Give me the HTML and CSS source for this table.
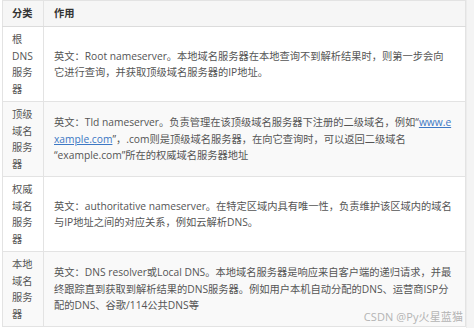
FILE: index.html
```html
<!DOCTYPE html>
<html lang="zh-CN">
<head>
<meta charset="utf-8">
<title>DNS 服务器分类</title>
<link rel="stylesheet" href="styles.css">
</head>
<body>
<div class="page">
  <table class="dns">
    <thead>
      <tr><th class="cat">分类</th><th class="use">作用</th></tr>
    </thead>
    <tbody>
      <tr>
        <td class="cat">根<br>DNS<br>服务<br>器</td>
        <td class="use">英文：Root nameserver。本地域名服务器在本地查询不到解析结果时，则第一步会向<br>它进行查询，并获取顶级域名服务器的IP地址。</td>
      </tr>
      <tr class="alt">
        <td class="cat">顶级<br>域名<br>服务<br>器</td>
        <td class="use">英文：Tld nameserver。负责管理在该顶级域名服务器下注册的二级域名，例如“<a class="link">www.e<br>xample.com</a>”，.com则是顶级域名服务器，在向它查询时，可以返回二级域名<br>“example.com”所在的权威域名服务器地址</td>
      </tr>
      <tr>
        <td class="cat">权威<br>域名<br>服务<br>器</td>
        <td class="use">英文：authoritative nameserver。在特定区域内具有唯一性，负责维护该区域内的域名<br>与IP地址之间的对应关系，例如云解析DNS。</td>
      </tr>
      <tr class="alt">
        <td class="cat">本地<br>域名<br>服务<br>器</td>
        <td class="use">英文：DNS resolver或Local DNS。本地域名服务器是响应来自客户端的递归请求，并最<br>终跟踪直到获取到解析结果的DNS服务器。例如用户本机自动分配的DNS、运营商ISP分<br>配的DNS、谷歌/114公共DNS等</td>
      </tr>
    </tbody>
  </table>
  <div class="gutter"></div>
  <div class="watermark">CSDN @Py火星蓝猫</div>
</div>
</body>
</html>
```

FILE: styles.css
```css
html, body {
  margin: 0;
  padding: 0;
  background: #ffffff;
}
body {
  font-family: "Open Sans", "Noto Sans CJK SC", sans-serif;
  font-size: 10.25px;
  color: #555555;
}
.page {
  position: relative;
  display: flex;
  width: 474px;
  height: 328px;
  overflow: hidden;
  padding-left: 2px;
  box-sizing: border-box;
}
.dns {
  border-collapse: collapse;
  width: 464px;
  flex: none;
  align-self: flex-start;
  table-layout: fixed;
}
.dns th, .dns td {
  border: 1px solid #e3e3e3;
  line-height: 16.5px;
  vertical-align: middle;
  text-align: left;
  white-space: nowrap;
}
.dns thead th {
  background: #f6f6f6;
  color: #333333;
  font-weight: bold;
  padding: 4px 10px;
  height: 17px;
  border-bottom: 1px solid #dcdcdc;
}
.dns td {
  padding: 4px 10px;
  height: 66px;
}
.dns .cat {
  width: 21px;
  padding-left: 9px;
  padding-right: 10px;
}
.dns tr.alt td {
  background: #f9f9f9;
}
.link {
  color: #3d78c4;
  text-decoration: underline;
}
.gutter {
  flex: 1;
  background: #f4f4f4;
  border-left: 1px solid #ececec;
}
.watermark {
  position: absolute;
  right: 11px;
  bottom: 4px;
  font-size: 11px;
  color: #b4b4b4;
  letter-spacing: 0.1px;
}
```
